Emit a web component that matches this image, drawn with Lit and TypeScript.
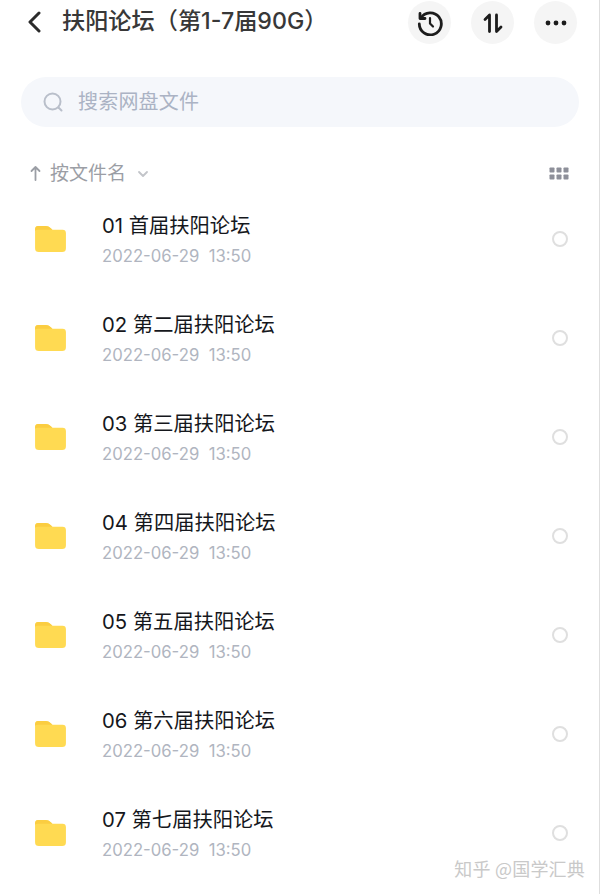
import { LitElement, html, css, svg } from "lit";
import { customElement } from "lit/decorators.js";

const ROWS = [
  "01 首届扶阳论坛",
  "02 第二届扶阳论坛",
  "03 第三届扶阳论坛",
  "04 第四届扶阳论坛",
  "05 第五届扶阳论坛",
  "06 第六届扶阳论坛",
  "07 第七届扶阳论坛",
];

@customElement("app-root")
export class AppRoot extends LitElement {
  static styles = css`
    :host {
      display: block;
      width: 600px;
      height: 894px;
      background: #fff;
      font-family: "Noto Sans CJK SC", "Inter", sans-serif;
      overflow: hidden;
      position: relative;
    }
    .page {
      height: 894px;
      box-sizing: border-box;
      border-right: 1px solid #dedede;
      display: flex;
      flex-direction: column;
    }
    .header {
      height: 45px;
      display: flex;
      align-items: center;
      padding-left: 27px;
      padding-right: 22px;
      flex: none;
    }
    .back { width: 14px; height: 22px; flex: none; margin-top: -1px; }
    .title {
      margin-left: 21px;
      font-size: 23.2px;
      line-height: 30px;
      padding-bottom: 4px;
      font-weight: 500;
      color: #383838;
      white-space: nowrap;
      flex: 1;
      font-family: "Inter", "Noto Sans CJK SC", sans-serif;
    }
    .btns { display: flex; gap: 20px; }
    .btn {
      width: 43px; height: 43px; border-radius: 50%;
      background: #f5f5f5;
      display: flex; align-items: center; justify-content: center;
    }
    .search {
      margin: 32px 20px 0 21px;
      height: 50px;
      border-radius: 25px;
      background: #f5f7fb;
      display: flex;
      align-items: center;
      padding-left: 22px;
      flex: none;
    }
    .search-text {
      margin-left: 15px;
      font-size: 20px;
      line-height: 28px;
      padding-bottom: 2px;
      color: #abb3c4;
      letter-spacing: 0.2px;
    }
    .sort {
      margin-top: 30px;
      height: 32px;
      display: flex;
      align-items: center;
      padding-left: 30px;
      padding-right: 30px;
      flex: none;
    }
    .sort-text { margin-left: 9px; font-size: 19px; line-height: 26px; padding-bottom: 2px; color: #9b9ea5; }
    .chev { margin-left: 11px; margin-top: 2px; }
    .grid { margin-top: 2px; }
    .spacer { flex: 1; }
    .list { display: flex; flex-direction: column; }
    .row {
      height: 99px;
      display: flex;
      align-items: center;
      padding-left: 35px;
      padding-right: 31px;
      flex: none;
    }
    .folder { flex: none; margin-top: -1px; }
    .info { margin-left: 36px; flex: 1; margin-top: 4px; }
    .name {
      font-size: 20.3px;
      line-height: 30px;
      color: #15171c;
      font-family: "Inter", "Noto Sans CJK SC", sans-serif;
    }
    .date {
      font-size: 16.7px;
      line-height: 30px;
      color: #b0b5c0;
      white-space: pre;
      font-family: "Inter", sans-serif;
    }
    .radio {
      width: 16px; height: 16px;
      box-sizing: border-box;
      border: 2px solid #dfdfdf;
      border-radius: 50%;
      flex: none;
    }
    .mark {
      position: absolute;
      right: 15px;
      bottom: 16px;
      font-size: 18px;
      line-height: 20px;
      letter-spacing: 0.2px;
      color: #c9c9c9;
      white-space: nowrap;
    }
  `;

  private folder() {
    return svg`<svg class="folder" width="31" height="27" viewBox="0 0 32 28">
      <path d="M0 4.5 Q0 1 3.5 1 H11 Q14 1 16 3 L18 5 H28.5 Q32 5 32 8.5 V24 Q32 28 28 28 H4 Q0 28 0 24 Z" fill="#ffda52"/>
      <path d="M0 4.5 Q0 1 3.5 1 H11 Q14 1 16 3 L18 5 H3 Q1 5 0 6 Z" fill="#fbcd41"/>
    </svg>`;
  }

  render() {
    return html`
      <div class="page">
        <div class="header">
          <svg class="back" viewBox="0 0 14 22"><path d="M12 2 L3 11 L12 20" fill="none" stroke="#2b2b2b" stroke-width="3" stroke-linecap="round" stroke-linejoin="round"/></svg>
          <div class="title">扶阳论坛（第1-7届90G）</div>
          <div class="btns">
            <div class="btn">
              <svg width="26" height="26" viewBox="0 0 26 26" fill="none" stroke="#1c1c1c" stroke-width="2.8" stroke-linecap="round" stroke-linejoin="round">
                <path d="M4 8 A11 11 0 1 1 2.3 14"/>
                <path d="M3 3.5 V8.5 H8"/>
                <path d="M13 8 V13.5 L16 16.5" stroke-width="2.2"/>
              </svg>
            </div>
            <div class="btn">
              <svg width="20" height="20" viewBox="0 0 20 20" fill="none" stroke="#1c1c1c" stroke-width="2.8" stroke-linecap="round" stroke-linejoin="round">
                <path d="M6.5 18.5 V2 L2 6.5"/>
                <path d="M13.5 2 V18.5 L18 14"/>
              </svg>
            </div>
            <div class="btn">
              <svg width="22" height="6" viewBox="0 0 22 6" fill="#1c1c1c">
                <circle cx="3" cy="3" r="2.4"/><circle cx="11" cy="3" r="2.4"/><circle cx="19" cy="3" r="2.4"/>
              </svg>
            </div>
          </div>
        </div>
        <div class="search">
          <svg width="20" height="20" viewBox="0 0 20 20" fill="none" stroke="#b9bfca" stroke-width="2" stroke-linecap="round">
            <circle cx="9.5" cy="9.5" r="8"/><path d="M15.5 15.5 L18.5 18.5"/>
          </svg>
          <span class="search-text">搜索网盘文件</span>
        </div>
        <div class="sort">
          <svg width="11" height="16" viewBox="0 0 11 16" fill="none" stroke="#9b9ea5" stroke-width="1.8" stroke-linecap="round" stroke-linejoin="round">
            <path d="M5.5 15 V2 M1.5 6 L5.5 2 L9.5 6"/>
          </svg>
          <span class="sort-text">按文件名</span>
          <svg class="chev" width="12" height="8" viewBox="0 0 12 8" fill="none" stroke="#c2c4c9" stroke-width="1.8" stroke-linecap="round" stroke-linejoin="round">
            <path d="M2 2 L6 6 L10 2"/>
          </svg>
          <span class="spacer"></span>
          <svg class="grid" width="20" height="14" viewBox="0 0 20 14" fill="#8d8f99">
            ${[0, 7, 14].map((x) =>
              [0, 7].map((y) => svg`<rect x=${x + 0.5} y=${y + 0.5} width="5" height="5" rx="0.8"/>`)
            )}
          </svg>
        </div>
        <div class="list">
          ${ROWS.map(
            (n) => html`
              <div class="row">
                ${this.folder()}
                <div class="info">
                  <div class="name">${n}</div>
                  <div class="date">2022-06-29  13:50</div>
                </div>
                <div class="radio"></div>
              </div>
            `
          )}
        </div>
      </div>
      <div class="mark">知乎 @国学汇典</div>
    `;
  }
}
